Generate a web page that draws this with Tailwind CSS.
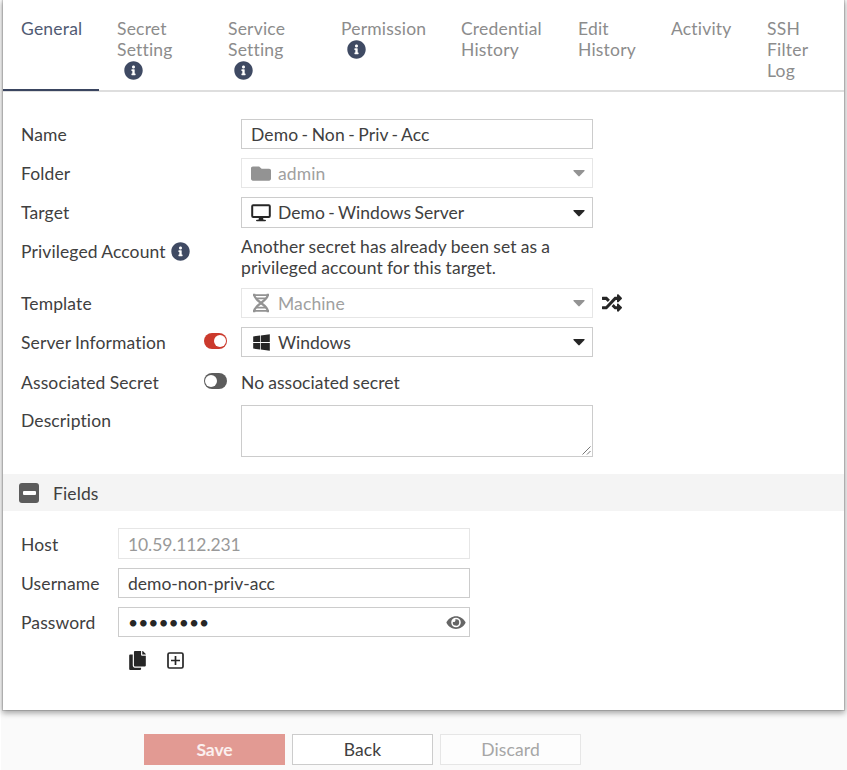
<!DOCTYPE html>
<html lang="en">
<head>
<meta charset="utf-8">
<title>Secret</title>
<script src="https://cdn.jsdelivr.net/npm/@tailwindcss/browser@4"></script>
</head>
<body class="w-[847px] h-[770px] overflow-hidden bg-white font-['Lato',sans-serif] text-[17.5px] leading-[21px] tracking-[0.12px] [font-variant-ligatures:none] text-[#404040]">
<svg class="hidden">
  <symbol id="info" viewBox="0 0 512 512"><path d="M256 8C119.043 8 8 119.083 8 256c0 136.997 111.043 248 248 248s248-111.003 248-248C504 119.083 392.957 8 256 8zm0 110c23.196 0 42 18.804 42 42s-18.804 42-42 42-42-18.804-42-42 18.804-42 42-42zm56 254c0 6.627-5.373 12-12 12h-88c-6.627 0-12-5.373-12-12v-24c0-6.627 5.373-12 12-12h12v-64h-12c-6.627 0-12-5.373-12-12v-24c0-6.627 5.373-12 12-12h64c6.627 0 12 5.373 12 12v100h12c6.627 0 12 5.373 12 12v24z"/></symbol>
  <symbol id="caret" viewBox="0 0 12 7"><path d="M1 0H11Q12.2 0 11.5 1L6.7 6.1Q6 6.7 5.3 6.1L.5 1Q-.2 0 1 0Z"/></symbol>
</svg>
<div class="ml-px h-full bg-[#fafafa] pl-[2px] pr-[3px]">
  <main class="h-[710px] bg-white shadow-[0_2px_6px_1px_rgba(0,0,0,0.36),0_0_0_1px_rgba(0,0,0,0.12)]">
    <nav class="flex h-[92px] border-b-2 border-[#dedede] tracking-[0.2px] text-[#8c8c8c] [&>div]:pl-[18px] [&>div]:pt-[18px] [&>div]:shrink-0">
      <div class="w-[96px] h-[91px] border-b-2 border-[#3a4560] text-[#515b73]">General</div>
      <div class="w-[111px]">Secret<br>Setting<svg class="ml-[7px] mt-[1px] size-[19px] fill-[#3f4a63]"><use href="#info"/></svg></div>
      <div class="w-[113px]">Service<br>Setting<svg class="ml-[6px] mt-[1px] size-[19px] fill-[#3f4a63]"><use href="#info"/></svg></div>
      <div class="w-[120px]">Permission<svg class="ml-[6px] mt-px size-[19px] fill-[#3f4a63]"><use href="#info"/></svg></div>
      <div class="w-[117px]">Credential<br>History</div>
      <div class="w-[93px]">Edit<br>History</div>
      <div class="w-[96px]">Activity</div>
      <div class="w-[80px]">SSH<br>Filter<br>Log</div>
    </nav>

    <section class="h-[382px] pl-[18px] pt-[27px] [word-spacing:-0.5px]">
      <div class="flex h-[39px]">
        <div class="w-[220px] pt-[5px]">Name</div>
        <div class="flex h-[30px] w-[352px] items-center border border-[#ccc] px-[9px] [word-spacing:-1.2px]">Demo - Non - Priv - Acc</div>
      </div>
      <div class="flex h-[39px]">
        <div class="w-[220px] pt-[5px]">Folder</div>
        <div class="flex h-[30px] w-[352px] items-center border border-[#e6e6e6] px-[9px] text-[#a0a0a0]">
          <svg class="mr-[7px] h-[19px] w-[20px] fill-[#939393]" viewBox="0 0 512 512" preserveAspectRatio="none"><path d="M464 128H272l-64-64H48C21.49 64 0 85.49 0 112v288c0 26.51 21.49 48 48 48h416c26.51 0 48-21.49 48-48V176c0-26.51-21.49-48-48-48z"/></svg>
          <span>admin</span><svg class="-mr-[2px] ml-auto h-[7px] w-[12px] fill-[#939393]"><use href="#caret"/></svg>
        </div>
      </div>
      <div class="flex h-[39px]">
        <div class="w-[220px] pt-[5px]">Target</div>
        <div class="flex h-[31px] w-[352px] items-center border border-[#ccc] px-[9px]">
          <svg class="mr-[7px] h-[18px] w-[20px]" viewBox="0 0 20 18"><rect x="1.2" y="1.3" width="17.6" height="11.7" rx="1" fill="none" stroke="#262626" stroke-width="2"/><path d="M8 13.5h4l.5 2.2H14q1 0 1 .8t-1 .8H6q-1 0-1-.8t1-.8h1.5Z" fill="#262626"/></svg>
          <span class="tracking-[0.05px] [word-spacing:-1.2px]">Demo - Windows Server</span><svg class="-mr-[2px] ml-auto mt-[2px] h-[7px] w-[12px] fill-[#262626]"><use href="#caret"/></svg>
        </div>
      </div>
      <div class="flex h-[52px]">
        <div class="flex h-[31px] w-[220px] items-center">Privileged Account<svg class="ml-[5px] size-[19px] fill-[#3f4a63]"><use href="#info"/></svg></div>
        <div class="w-[352px]">Another secret has already been set as a<br>privileged account for this target.</div>
      </div>
      <div class="flex h-[39px]">
        <div class="w-[220px] pt-[5px]">Template</div>
        <div class="flex h-[30px] w-[352px] items-center border border-[#e6e6e6] px-[9px] text-[#a0a0a0]">
          <svg class="ml-px mr-[8px] h-[20px] w-[18px] fill-none stroke-[#939393]" viewBox="0 0 18 20"><path stroke-width="2.3" d="M2.2.8v1C2.2 8.3 15.8 11.7 15.8 18.2v1M15.8.8v1C15.8 8.3 2.2 11.7 2.2 18.2v1"/><path stroke-width="1.8" d="M1 2.2h16M4 5.4h10M4 14.6h10M1 17.8h16"/></svg>
          <span>Machine</span><svg class="-mr-[2px] ml-auto h-[7px] w-[12px] fill-[#939393]"><use href="#caret"/></svg>
        </div>
        <svg class="ml-[9px] mt-[5px] size-[20px] fill-[#262626]" viewBox="0 0 512 512"><path d="M504.971 359.029c9.373 9.373 9.373 24.569 0 33.941l-80 79.984c-15.01 15.01-40.971 4.49-40.971-16.971V416h-58.785a12.004 12.004 0 0 1-8.773-3.812l-70.556-75.596 53.333-57.143L352 336h32v-39.981c0-21.438 25.943-31.998 40.971-16.971l80 79.981zM12 176h84l52.781 56.551 53.333-57.143-70.556-75.596A11.999 11.999 0 0 0 122.785 96H12c-6.627 0-12 5.373-12 12v56c0 6.627 5.373 12 12 12zm372 0v39.984c0 21.46 25.961 31.98 40.971 16.971l80-79.984c9.373-9.373 9.373-24.569 0-33.941l-80-79.981C409.943 24.021 384 34.582 384 56.019V96h-58.785a12.004 12.004 0 0 0-8.773 3.812L96 336H12c-6.627 0-12 5.373-12 12v56c0 6.627 5.373 12 12 12h110.785c3.326 0 6.503-1.381 8.773-3.812L352 176h32z"/></svg>
      </div>
      <div class="flex h-[39px]">
        <div class="w-[183px] pt-[5px]">Server Information</div>
        <div class="w-[37px] pt-[6px]"><div class="flex h-[16px] w-[23px] items-center justify-end rounded-full bg-[#cb3a2d] pr-[1px]"><div class="size-[12px] rounded-full bg-white"></div></div></div>
        <div class="flex h-[30px] w-[352px] items-center border border-[#ccc] px-[9px]">
          <svg class="ml-[2px] mr-[8px] h-[19px] w-[17px] fill-[#262626]" viewBox="0 0 448 512"><path d="M0 93.7l183.6-25.3v177.4H0V93.7zm0 324.6l183.6 25.3V268.4H0v149.9zm203.8 28L448 480V268.4H203.8v177.9zm0-380.6v180.1H448V32L203.8 65.7z"/></svg>
          <span class="tracking-normal">Windows</span><svg class="-mr-[2px] ml-auto h-[7px] w-[12px] fill-[#262626]"><use href="#caret"/></svg>
        </div>
      </div>
      <div class="flex h-[39px]">
        <div class="w-[183px] pt-[6px]">Associated Secret</div>
        <div class="w-[37px] pt-[7px]"><div class="flex h-[16px] w-[23px] items-center rounded-full bg-[#5c5c5c] pl-[1px]"><div class="size-[12px] rounded-full bg-white"></div></div></div>
        <div class="pt-[6px] tracking-[0.05px]">No associated secret</div>
      </div>
      <div class="flex">
        <div class="w-[220px] pt-[5px]">Description</div>
        <div class="flex h-[52px] w-[352px] items-end justify-end border border-[#ccc] p-px">
          <svg class="size-[9px]" viewBox="0 0 9 9"><path d="M.5 8.5l8-8M5 8.5L8.5 5" stroke="#777" fill="none"/></svg>
        </div>
      </div>
    </section>

    <header class="flex h-[37px] items-center bg-[#f4f4f4] pl-[16px]">
      <div class="flex size-[20px] items-center justify-center rounded-[3px] bg-[#5c5c5c]"><div class="h-[4px] w-[13px] rounded-[1px] bg-white"></div></div>
      <span class="ml-[14px] mt-[2px]">Fields</span>
    </header>

    <section class="pl-[18px] pt-[17px]">
      <div class="flex h-[40px]">
        <div class="w-[97px] pt-[6px]">Host</div>
        <div class="flex h-[31px] w-[352px] items-center border border-[#e6e6e6] px-[9px] pt-px tracking-[-0.1px] text-[#999]">10.59.112.231</div>
      </div>
      <div class="flex h-[39px]">
        <div class="w-[97px] pt-[5px]">Username</div>
        <div class="flex h-[30px] w-[352px] items-center border border-[#ccc] px-[9px] tracking-normal">demo-non-priv-acc</div>
      </div>
      <div class="flex h-[42px]">
        <div class="w-[97px] pt-[5px]">Password</div>
        <div class="flex h-[30px] w-[352px] items-center border border-[#ccc] pl-[9px] pr-[3px] tracking-normal text-[#262626]"><span>••••••••</span>
          <svg class="ml-auto h-[17px] w-[20px] fill-[#666]" viewBox="0 0 576 512"><path d="M572.52 241.4C518.29 135.59 410.93 64 288 64S57.68 135.64 3.48 241.41a32.35 32.35 0 0 0 0 29.19C57.71 376.41 165.07 448 288 448s230.32-71.64 284.52-177.41a32.35 32.35 0 0 0 0-29.19zM288 400a144 144 0 1 1 144-144 143.93 143.93 0 0 1-144 144zm0-240a95.31 95.31 0 0 0-25.31 3.79 47.85 47.85 0 0 1-66.9 66.9A95.78 95.78 0 1 0 288 160z"/></svg>
        </div>
      </div>
      <div class="flex pl-[108px] pt-[2px]">
        <svg class="h-[19px] w-[17px] fill-[#262626]" viewBox="0 0 448 512"><path d="M320 448v40c0 13.255-10.745 24-24 24H24c-13.255 0-24-10.745-24-24V120c0-13.255 10.745-24 24-24h72v296c0 30.879 25.121 56 56 56h168zm0-344V0H152c-13.255 0-24 10.745-24 24v368c0 13.255 10.745 24 24 24h272c13.255 0 24-10.745 24-24V128H344c-13.2 0-24-10.8-24-24zm120.971-31.029L375.029 7.029A24 24 0 0 0 358.059 0H352v96h96v-6.059a24 24 0 0 0-7.029-16.97z"/></svg>
        <svg class="ml-[21px] mt-px size-[17px] fill-none stroke-[#262626]" viewBox="0 0 17 17"><rect x="1" y="1" width="15" height="15" rx="1.5" stroke-width="1.7"/><path d="M8.5 4v9M4 8.5h9" stroke-width="1.7"/></svg>
      </div>
    </section>
  </main>
  <footer class="flex gap-[7px] pl-[141px] pt-[24px] [&>div]:flex [&>div]:h-[31px] [&>div]:w-[141px] [&>div]:items-center [&>div]:justify-center">
    <div class="bg-[#e29a93] font-bold tracking-[-0.1px] text-white/85">Save</div>
    <div class="border border-[#ccc] bg-white">Back</div>
    <div class="border border-[#e6e6e6] bg-[#fdfdfd] text-[#a6a6a6]">Discard</div>
  </footer>
</div>
</body>
</html>
